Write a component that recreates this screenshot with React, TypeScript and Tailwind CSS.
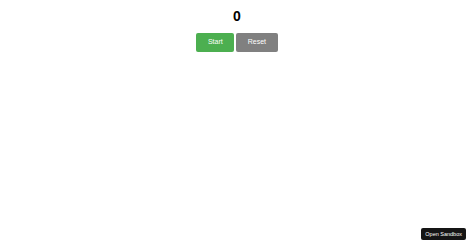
export default function App() {
  return (
    <div className="relative h-[248px] w-full bg-white font-['Liberation_Sans',Arial,sans-serif]">
      <div className="flex flex-col items-center pt-[8px]">
        <h1 className="text-[14px] font-bold leading-[16px] text-black">0</h1>
        <div className="mt-[9px] flex gap-[2px]">
          <button className="h-[19px] rounded-[2px] bg-[#4caf50] px-[11.5px] text-[7px] text-white">
            Start
          </button>
          <button className="h-[19px] rounded-[2px] bg-[#808080] px-[11.5px] text-[7px] text-white">
            Reset
          </button>
        </div>
      </div>
      <button className="absolute right-[8px] bottom-[8px] h-[12px] rounded-[2px] bg-[#151515] px-[4px] text-[5.5px] leading-[12px] text-white">
        Open Sandbox
      </button>
    </div>
  );
}
